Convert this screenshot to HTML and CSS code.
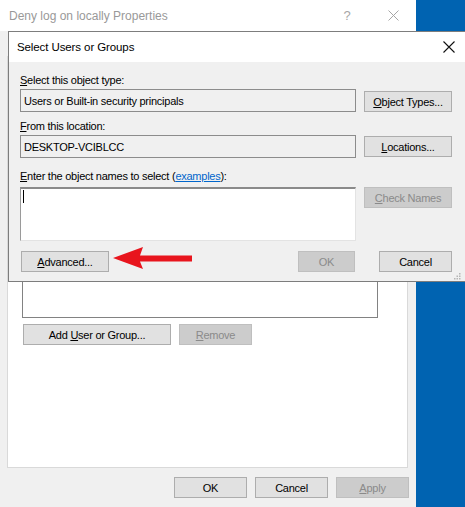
FILE: index.html
```html
<!DOCTYPE html>
<html>
<head>
<meta charset="utf-8">
<link rel="stylesheet" href="styles.css">
</head>
<body>
<div class="desk">
  <div class="win">
    <div class="win-title">
      <span class="wt-text">Deny log on locally Properties</span>
      <span class="wt-help">?</span>
      <span class="wt-close"><svg width="11" height="11" viewBox="0 0 11 11"><path d="M0.5 0.5L10.5 10.5M10.5 0.5L0.5 10.5" stroke="#a6a6a6" stroke-width="1" fill="none"/></svg></span>
    </div>
    <div class="win-body">
      <div class="panel">
        <div class="listbox"></div>
        <div class="panel-btns">
          <div class="btn btn-add"><span>Add <u>U</u>ser or Group...</span></div>
          <div class="btn btn-std disabled"><span><u>R</u>emove</span></div>
        </div>
      </div>
      <div class="win-btns">
        <div class="btn btn-std"><span>OK</span></div>
        <div class="btn btn-std"><span>Cancel</span></div>
        <div class="btn btn-std disabled"><span><u>A</u>pply</span></div>
      </div>
    </div>
  </div>

  <div class="dlg">
    <div class="dlg-title">
      <span class="dt-text">Select Users or Groups</span>
      <svg class="dt-close" width="12" height="12" viewBox="0 0 12 12"><path d="M0.5 0.5L11.5 11.5M11.5 0.5L0.5 11.5" stroke="#111" stroke-width="1.1" fill="none"/></svg>
    </div>
    <div class="dlg-body">
      <div class="lbl"><u>S</u>elect this object type:</div>
      <div class="field-row row-a">
        <div class="tbox"><span>Users or Built-in security principals</span></div>
        <div class="btn btn-side"><span><u>O</u>bject Types...</span></div>
      </div>
      <div class="lbl lbl-2"><u>F</u>rom this location:</div>
      <div class="field-row row-b">
        <div class="tbox"><span>DESKTOP-VCIBLCC</span></div>
        <div class="btn btn-side"><span><u>L</u>ocations...</span></div>
      </div>
      <div class="lbl lbl-3"><u>E</u>nter the object names to select (<span class="link">examples</span>):</div>
      <div class="field-row row-c">
        <div class="tarea"><span class="caret"></span></div>
        <div class="btn btn-side disabled"><span><u>C</u>heck Names</span></div>
      </div>
      <div class="dlg-btns">
        <div class="btn btn-adv"><span><u>A</u>dvanced...</span></div>
        <svg class="arrow" width="80" height="22" viewBox="0 0 80 22"><polygon points="0,11 30,0 27,8.5 79,8.5 79,14.5 27,14.5 30,22" fill="#e8151d"/></svg>
        <div class="spacer"></div>
        <div class="btn btn-ok disabled"><span>OK</span></div>
        <div class="btn btn-std"><span>Cancel</span></div>
      </div>
    </div>
    <svg class="grip" width="7" height="7" viewBox="0 0 7 7">
      <rect x="5" y="0" width="1.5" height="1.5" fill="#b5b5b5"/>
      <rect x="2.5" y="2.5" width="1.5" height="1.5" fill="#b5b5b5"/>
      <rect x="5" y="2.5" width="1.5" height="1.5" fill="#b5b5b5"/>
      <rect x="0" y="5" width="1.5" height="1.5" fill="#b5b5b5"/>
      <rect x="2.5" y="5" width="1.5" height="1.5" fill="#b5b5b5"/>
      <rect x="5" y="5" width="1.5" height="1.5" fill="#b5b5b5"/>
    </svg>
  </div>
</div>
</body>
</html>
```

FILE: styles.css
```css
* { box-sizing: border-box; }
html, body {
  margin: 0;
  padding: 0;
}
body {
  font-family: "Liberation Sans", Arial, sans-serif;
  font-size: 11px;
  letter-spacing: -0.25px;
  color: #000;
}
u { text-decoration: underline; text-underline-offset: 1px; }

.desk {
  position: relative;
  width: 465px;
  height: 507px;
  overflow: hidden;
  background: #0063b1;
}

/* outer properties window */
.win {
  width: 416px;
  height: 507px;
  background: #f0f0f0;
  display: flex;
  flex-direction: column;
}
.win-title {
  height: 31px;
  background: #fff;
  display: flex;
  align-items: center;
  flex-shrink: 0;
}
.wt-text {
  padding-left: 9px;
  color: #999;
  font-size: 12px;
  letter-spacing: 0;
  flex: 1;
}
.wt-help {
  width: 46px;
  text-align: center;
  color: #a6a6a6;
  font-size: 13px;
}
.wt-close {
  width: 46px;
  display: flex;
  justify-content: center;
}
.win-body {
  flex: 1;
  padding-top: 25px;
  display: flex;
  flex-direction: column;
}
.panel {
  margin-left: 7px;
  width: 401px;
  height: 412px;
  background: #fff;
  border: 1px solid #d9d9d9;
  padding-left: 14px;
}
.listbox {
  margin-top: 43px;
  width: 356px;
  height: 218px;
  border: 1px solid #828282;
  background: #fff;
}
.panel-btns {
  margin-top: 6px;
  display: flex;
  gap: 8px;
  padding-left: 1px;
}
.win-btns {
  margin-top: 9px;
  display: flex;
  justify-content: flex-end;
  gap: 8px;
  padding-right: 7px;
}

/* buttons */
.btn {
  height: 21px;
  background: #e1e1e1;
  border: 1px solid #adadad;
  display: flex;
  align-items: center;
  justify-content: center;
  white-space: nowrap;
  color: #000;
}
.btn.disabled {
  background: #cccccc;
  border-color: #bfbfbf;
  color: #8a8a8a;
}
.btn-std { width: 73px; }
.btn-add { width: 148px; }
.btn-side { width: 88px; }
.btn-adv { width: 88px; margin-left: 1px; }
.btn-ok { width: 57px; margin-right: 24px; }

/* select users dialog */
.dlg {
  position: absolute;
  left: 8px;
  top: 31px;
  width: 458px;
  height: 251px;
  background: #f0f0f0;
  border: 1px solid #7d7d7d;
  display: flex;
  flex-direction: column;
}
.dlg-title {
  height: 30px;
  background: #fff;
  display: flex;
  align-items: center;
  padding-left: 8px;
  flex-shrink: 0;
}
.dt-text {
  flex: 1;
  font-size: 11.5px;
  letter-spacing: -0.1px;
}
.dt-close {
  margin-right: 10px;
}
.dlg-body {
  padding: 10px 0 0 11px;
  display: flex;
  flex-direction: column;
}
.lbl {
  height: 16px;
  line-height: 16px;
}
.lbl-2 { margin-top: 6px; }
.lbl-3 { margin-top: 10px; }
.link {
  color: #0066cc;
  text-decoration: underline;
}
.field-row {
  display: flex;
  gap: 8px;
  margin-top: 1px;
}
.row-a { align-items: flex-end; }
.row-b { align-items: center; }
.row-c { margin-top: 3px; align-items: flex-start; }
.tbox {
  width: 336px;
  height: 23px;
  border: 1px solid #8c8c8c;
  background: #f0f0f0;
  display: flex;
  align-items: center;
  padding-left: 3px;
}
.tarea {
  width: 336px;
  height: 54px;
  background: #fff;
  border-top: 2px solid #8a8a8a;
  border-left: 1px solid #9a9a9a;
  border-right: 1px solid #e3e3e3;
  border-bottom: 1px solid #e3e3e3;
  padding: 1px 0 0 2px;
}
.caret {
  display: block;
  width: 1px;
  height: 13px;
  background: #000;
}
.dlg-btns {
  margin-top: 10px;
  display: flex;
  align-items: flex-start;
  width: 432px;
}
.arrow {
  margin-left: 4px;
  margin-top: -4px;
}
.spacer { flex: 1; }
.grip {
  position: absolute;
  right: 4px;
  bottom: 1px;
}
```
